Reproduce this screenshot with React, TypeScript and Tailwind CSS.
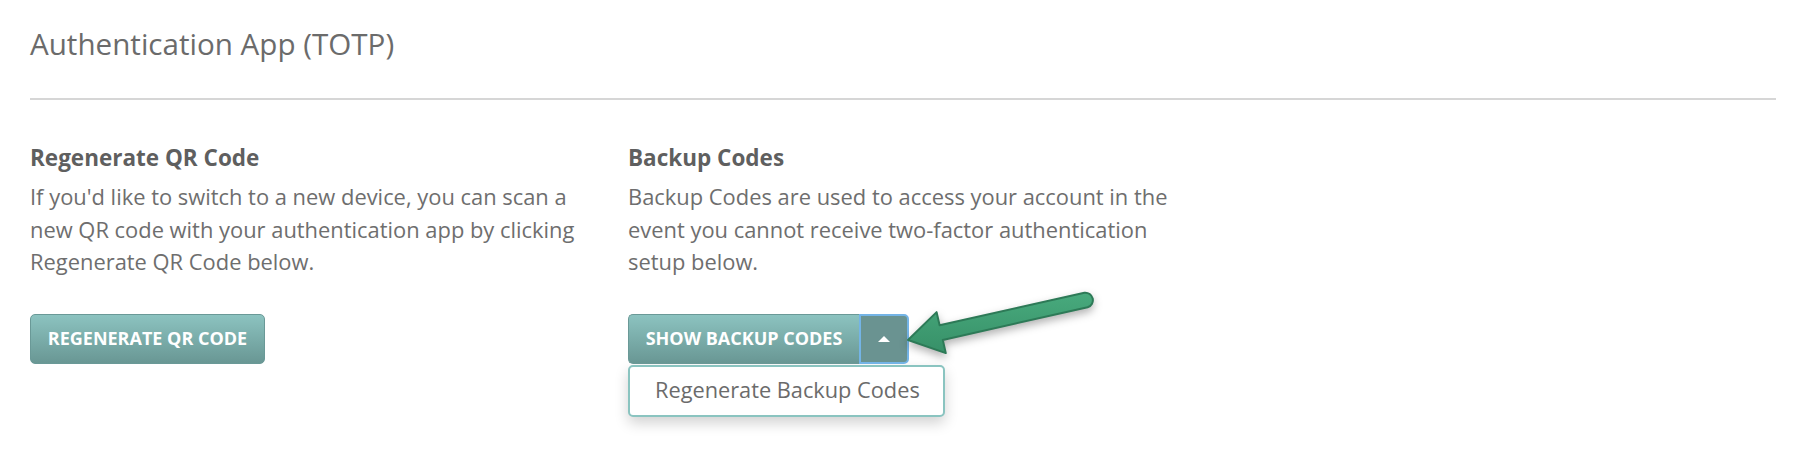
import React from 'react';

function Arrow() {
  return (
    <svg
      className="absolute left-[270px] top-[-30px] drop-shadow-[0_4px_4px_rgba(0,0,0,0.3)]"
      width="210"
      height="80"
      viewBox="0 0 210 80"
    >
      <defs>
        <linearGradient id="arrowFill" x1="0" y1="0" x2="0" y2="1">
          <stop offset="0" stopColor="#48aa7d" />
          <stop offset="1" stopColor="#379068" />
        </linearGradient>
      </defs>
      <path
        d="M10 56 L38.6 28.1 L41.6 41.3 L186.4 8.7 A7.5 7.5 0 0 1 189.6 23.3 L44.8 55.9 L47.8 69.1 Z"
        fill="url(#arrowFill)"
        stroke="#2d7a57"
        strokeWidth="2"
        strokeLinejoin="round"
      />
    </svg>
  );
}

export default function App() {
  return (
    <div className="min-h-screen bg-white font-['Open_Sans','Lato',sans-serif] text-[#6e6e6e] pl-[30px] pr-[24px]">
      {/* Title */}
      <div className="pt-[24px] pb-[34px]">
        <h1 className="text-[29.6px] leading-[40px] font-normal text-[#6b6b6b]">Authentication App (TOTP)</h1>
      </div>
      <div className="h-[2px] bg-[#d6d6d6]" />

      {/* Two columns */}
      <div className="grid grid-cols-[598px_598px] pt-[43px]">
        <div>
          <h3 className="text-[22.5px] leading-[30px] font-bold text-[#5f5f5f]">Regenerate QR Code</h3>
          <p className="text-[21.9px] leading-[32.5px] mt-[8px]">
            If you'd like to switch to a new device, you can scan a<br />
            new QR code with your authentication app by clicking<br />
            Regenerate QR Code below.
          </p>
          <button className="mt-[35px] h-[50px] w-[235px] rounded-[5px] border border-[#6a9997] bg-gradient-to-b from-[#8cc3c0] to-[#699794] text-[18px] font-bold uppercase text-white">
            Regenerate QR Code
          </button>
        </div>

        <div>
          <h3 className="text-[22.5px] leading-[30px] font-bold text-[#5f5f5f]">Backup Codes</h3>
          <p className="text-[21.9px] leading-[32.5px] mt-[8px]">
            Backup Codes are used to access your account in the<br />
            event you cannot receive two-factor authentication<br />
            setup below.
          </p>
          <div className="relative mt-[35px]">
            <div className="flex h-[50px] w-[281px]">
              <button className="h-full w-[231px] rounded-l-[5px] border border-r-0 border-[#6a9997] bg-gradient-to-b from-[#8cc3c0] to-[#699794] text-[18px] font-bold uppercase text-white">
                Show Backup Codes
              </button>
              <button className="flex h-full w-[50px] items-center justify-center rounded-r-[5px] border-2 border-[#74b4e6] bg-[#6a9391]">
                <span className="block h-0 w-0 border-x-[6px] border-b-[6px] border-x-transparent border-b-white" />
              </button>
            </div>
            <div className="mt-[1px] flex h-[52px] w-[317px] items-center rounded-[5px] border-2 border-[#8ac4c0] bg-white pl-[25px] text-[21.75px] text-[#6b6b6b] shadow-[0_6px_14px_rgba(0,0,0,0.18)]">
              Regenerate Backup Codes
            </div>
            <Arrow />
          </div>
        </div>
      </div>
    </div>
  );
}
